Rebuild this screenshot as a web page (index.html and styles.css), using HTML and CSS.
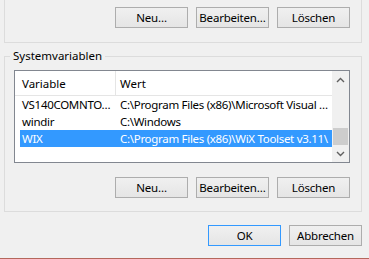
FILE: index.html
```html
<!DOCTYPE html>
<html lang="de">
<head>
  <meta charset="UTF-8">
  <link rel="stylesheet" href="styles.css">
  <title>Umgebungsvariablen</title>
</head>
<body>
  <div class="dialog">
    <div class="group cut">
      <div class="buttons">
        <button>Neu…</button>
        <button>Bearbeiten…</button>
        <button>Löschen</button>
      </div>
    </div>

    <fieldset class="group">
      <legend>Systemvariablen</legend>
      <div class="listview">
        <div class="list-main">
          <div class="header">
            <div class="col-a">Variable</div>
            <div class="col-b">Wert</div>
          </div>
          <div class="item">
            <div class="col-a">VS140COMNTO…</div>
            <div class="col-b">C:\Program Files (x86)\Microsoft Visual …</div>
          </div>
          <div class="item">
            <div class="col-a">windir</div>
            <div class="col-b">C:\Windows</div>
          </div>
          <div class="item selected">
            <div class="col-a">WIX</div>
            <div class="col-b">C:\Program Files (x86)\WiX Toolset v3.11\</div>
          </div>
        </div>
        <div class="scrollbar">
          <div class="arrow">
            <svg width="9" height="6" viewBox="0 0 9 6"><polyline points="1,5 4.5,1.5 8,5" fill="none" stroke="#606060" stroke-width="1.4"/></svg>
          </div>
          <div class="track"><div class="thumb"></div></div>
          <div class="arrow">
            <svg width="9" height="6" viewBox="0 0 9 6"><polyline points="1,1 4.5,4.5 8,1" fill="none" stroke="#606060" stroke-width="1.4"/></svg>
          </div>
        </div>
      </div>
      <div class="buttons">
        <button>Neu…</button>
        <button>Bearbeiten…</button>
        <button>Löschen</button>
      </div>
    </fieldset>

    <div class="buttons footer">
      <button class="default">OK</button>
      <button>Abbrechen</button>
    </div>
  </div>
</body>
</html>
```

FILE: styles.css
```css
html, body {
  width: 369px;
  height: 259px;
}

body {
  margin: 0;
  background: #f0f0f0;
  font-family: "Noto Sans", "DejaVu Sans", sans-serif;
  font-size: 11.5px;
  color: #000;
  border-bottom: 1px solid #b4675c;
  box-sizing: border-box;
  overflow: hidden;
}

.dialog {
  display: flex;
  flex-direction: column;
  padding: 0 7px 0 4px;
}

.group {
  border: 1px solid #dcdcdc;
  margin: 0;
  padding: 0 11px 13px 9px;
  min-width: 0;
}

.group.cut {
  border-top: 0;
  padding-top: 7px;
  padding-bottom: 14px;
}

fieldset.group {
  margin-top: 5px;
}

legend {
  padding: 0 3px;
  margin-left: -4px;
  line-height: 16px;
}

.buttons {
  display: flex;
  justify-content: flex-end;
  column-gap: 8px;
}

button {
  width: 73px;
  height: 21px;
  padding: 0;
  font-family: "Noto Sans", "DejaVu Sans", sans-serif;
  font-size: 11.5px;
  letter-spacing: -0.2px;
  color: #000;
  border: 1px solid #adadad;
  border-radius: 0;
  background: linear-gradient(#f0f0f0, #e5e5e5);
  white-space: nowrap;
}

button.default {
  border-color: #3399ff;
}

.listview {
  display: flex;
  height: 93px;
  margin: 6px 0 14px;
  border: 1px solid #828790;
  background: #fff;
  box-sizing: border-box;
}

.list-main {
  flex-grow: 1;
  display: flex;
  flex-direction: column;
}

.header {
  display: flex;
  height: 24px;
  align-items: center;
  border-bottom: 1px solid #e5e5e5;
}

.header .col-a {
  width: 93px;
  padding-left: 7px;
  align-self: stretch;
  display: flex;
  align-items: center;
  border-right: 1px solid #e5e5e5;
}

.header .col-b {
  padding-left: 4px;
}

.item {
  display: flex;
  height: 17px;
  line-height: 17px;
  margin-left: 5px;
  white-space: nowrap;
  overflow: hidden;
  letter-spacing: -0.3px;
}

.item .col-a {
  width: 93px;
  padding-left: 2px;
  flex-shrink: 0;
}

.item .col-b {
  padding-left: 5px;
}

.item.selected {
  background: #3399ff;
  color: #fff;
}

.scrollbar {
  width: 17px;
  display: flex;
  flex-direction: column;
  background: #f0f0f0;
}

.arrow {
  height: 17px;
  display: flex;
  align-items: center;
  justify-content: center;
}

.track {
  flex-grow: 1;
  display: flex;
  flex-direction: column;
  justify-content: flex-end;
}

.thumb {
  height: 17px;
  margin: 0 1px;
  background: #cdcdcd;
}

.footer {
  margin-top: 13px;
}
```
